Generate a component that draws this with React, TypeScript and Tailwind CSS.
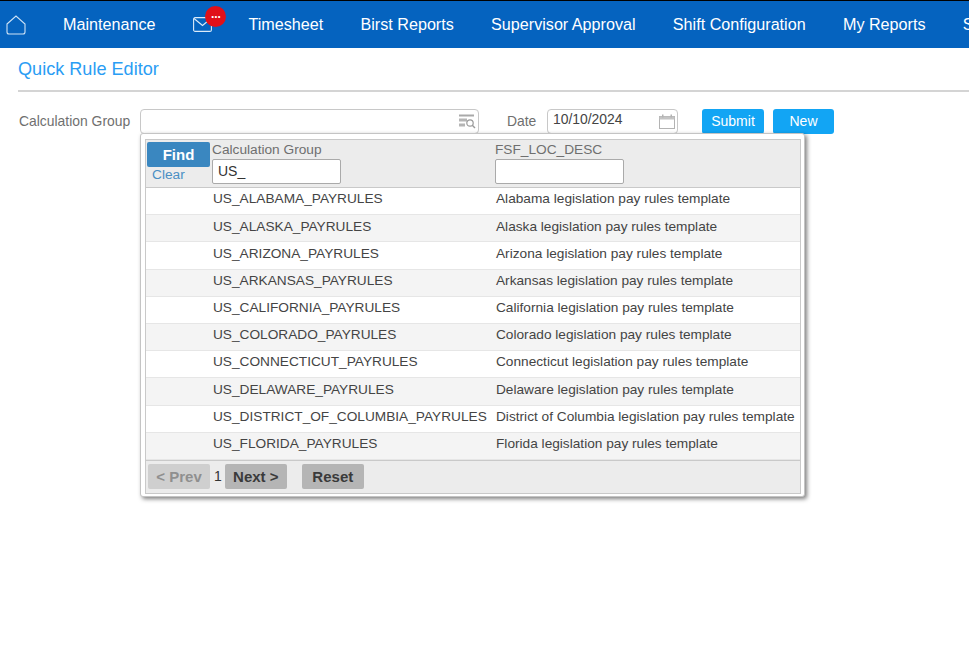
import React from "react";

const rows = [
  ["US_ALABAMA_PAYRULES", "Alabama legislation pay rules template"],
  ["US_ALASKA_PAYRULES", "Alaska legislation pay rules template"],
  ["US_ARIZONA_PAYRULES", "Arizona legislation pay rules template"],
  ["US_ARKANSAS_PAYRULES", "Arkansas legislation pay rules template"],
  ["US_CALIFORNIA_PAYRULES", "California legislation pay rules template"],
  ["US_COLORADO_PAYRULES", "Colorado legislation pay rules template"],
  ["US_CONNECTICUT_PAYRULES", "Connecticut legislation pay rules template"],
  ["US_DELAWARE_PAYRULES", "Delaware legislation pay rules template"],
  ["US_DISTRICT_OF_COLUMBIA_PAYRULES", "District of Columbia legislation pay rules template"],
  ["US_FLORIDA_PAYRULES", "Florida legislation pay rules template"],
];

const navLeft = ["Timesheet", "Birst Reports", "Supervisor Approval", "Shift Configuration", "My Reports", "System"];

export default function App() {
  return (
    <div className="w-[969px] h-[660px] overflow-hidden bg-white font-['Liberation_Sans',Arial,sans-serif]">
      <div className="h-px bg-black" />
      <nav className="h-[47px] bg-[#0563bf] flex items-center text-white text-[16.15px] whitespace-nowrap overflow-hidden">
        <svg width="20" height="20" viewBox="0 0 20 20" fill="none" stroke="#cfe3f6" strokeWidth="1.1" className="ml-[6px] mr-[37px] shrink-0">
          <path d="M1 9 L10 1 L19 9 V17 Q19 19 17 19 H3 Q1 19 1 17 Z" />
        </svg>
        <span>Maintenance</span>
        <span className="relative ml-[38px] mr-[36px] w-[19px] h-[15px] shrink-0">
          <svg width="19" height="15" viewBox="0 0 19 15" fill="none" stroke="#dcebf9" strokeWidth="1.1">
            <rect x="0.6" y="0.6" width="17.8" height="13.8" rx="1.5" />
            <path d="M1 1.5 L9.5 8.5 L18 1.5" />
          </svg>
          <span className="absolute left-[12px] top-[-11px] w-[21px] h-[21px] rounded-full bg-[#e01019] flex items-center justify-center text-[12px] leading-none font-bold pb-[5px]">
            ...
          </span>
        </span>
        {navLeft.map((n) => (
          <span key={n} className="mr-[37.3px]">{n}</span>
        ))}
      </nav>

      <div className="relative">
        <h1 className="ml-[18px] h-[42px] pt-[11px] text-[18.1px] leading-[21px] text-[#2a9df4]">Quick Rule Editor</h1>
        <div className="ml-[18px] h-[2px] bg-[#d4d4d4]" />

        <div className="relative mt-[17px] ml-[19px] flex items-center h-[25px] text-[13.9px] text-[#6f6f6f]">
          <span className="w-[121px]">Calculation Group</span>
          <div className="w-[339px] h-[25px] border border-[#c8c8c8] rounded-[4px] flex items-center justify-end pr-[2px]">
            <svg width="17" height="15" viewBox="0 0 17 15" fill="none">
              <rect x="0" y="0.5" width="15" height="2" fill="#a9a9a9" />
              <rect x="0" y="4.5" width="8" height="3" fill="#b5b5b5" />
              <rect x="0" y="9.5" width="6" height="3" fill="#b5b5b5" />
              <circle cx="11" cy="9" r="3.2" stroke="#9a9a9a" strokeWidth="1.2" />
              <path d="M13.3 11.3 L16 14" stroke="#9a9a9a" strokeWidth="1.4" />
            </svg>
          </div>
          <span className="ml-[28px] w-[40px]">Date</span>
          <div className="w-[131px] h-[25px] border border-[#c8c8c8] rounded-[4px] flex items-center justify-between pl-[5px] pr-[2px] text-[#444]">
            <span className="leading-none pb-[3px]">10/10/2024</span>
            <svg width="16" height="15" viewBox="0 0 16 15" fill="none">
              <rect x="0.5" y="2.5" width="15" height="12" stroke="#b3b3b3" />
              <rect x="0.5" y="2.5" width="15" height="3" fill="#c4c4c4" />
              <rect x="3" y="0.5" width="1.5" height="3" fill="#b3b3b3" />
              <rect x="11.5" y="0.5" width="1.5" height="3" fill="#b3b3b3" />
            </svg>
          </div>
          <button className="ml-[24px] w-[62px] h-[25px] bg-[#12a5f4] rounded-[3px] text-white text-[14px]">Submit</button>
          <button className="ml-[9px] w-[61px] h-[25px] bg-[#12a5f4] rounded-[3px] text-white text-[14px]">New</button>
        </div>

        <div className="absolute left-[140px] top-[85px] w-[665px] h-[364px] bg-white border border-[#c4c4c4] rounded-[3px] shadow-[2px_2px_4px_rgba(0,0,0,0.5)] pt-[5px] pl-[4px] pr-[3px]">
          <div className="border border-[#c9c9c9]">
            <div className="h-[48px] bg-[#ececec] border-b border-[#c9c9c9] flex text-[13.7px] text-[#6f6f6f]">
              <div className="w-[65px] ml-[1px] pt-[2px] shrink-0">
                <div className="w-[63px] h-[25px] bg-[#3a87c0] rounded-[2px] text-white font-bold text-[15px] leading-[25px] text-center">Find</div>
                <div className="pl-[5px] text-[#4a8fc4] leading-[16px] mt-[-1px] pt-[1px]">Clear</div>
              </div>
              <div className="w-[283px] shrink-0">
                <div className="leading-[16px] pt-[2px]">Calculation Group</div>
                <div className="mt-[1px] w-[129px] h-[25px] bg-white border border-[#aaa] rounded-[2px] pl-[5px] text-[14px] text-[#333] leading-[22px]">US_</div>
              </div>
              <div>
                <div className="leading-[16px] pt-[2px]">FSF_LOC_DESC</div>
                <div className="mt-[1px] w-[129px] h-[25px] bg-white border border-[#aaa] rounded-[2px]" />
              </div>
            </div>
            {rows.map(([a, b], i) => (
              <div key={a} className={`h-[27.2px] flex items-center pb-[3px] text-[13.68px] text-[#444] border-b border-[#e6e6e6] whitespace-nowrap ${i % 2 ? "bg-[#f4f4f4]" : "bg-white"}`}>
                <span className="ml-[67px] w-[283px] shrink-0">{a}</span>
                <span>{b}</span>
              </div>
            ))}
            <div className="h-[33px] bg-[#ececec] border-t border-[#c9c9c9] flex items-center pl-[2px] text-[15px] font-bold">
              <span className="w-[62px] h-[25px] bg-[#cfcfcf] text-[#8f8f8f] rounded-[2px] flex items-center justify-center">&lt; Prev</span>
              <span className="ml-[4px] text-[14px] font-normal text-[#333]">1</span>
              <span className="ml-[3px] w-[62px] h-[25px] bg-[#b5b5b5] text-[#3a3a3a] rounded-[2px] flex items-center justify-center">Next &gt;</span>
              <span className="ml-[15px] w-[62px] h-[25px] bg-[#b5b5b5] text-[#3a3a3a] rounded-[2px] flex items-center justify-center">Reset</span>
            </div>
          </div>
        </div>
      </div>
    </div>
  );
}
